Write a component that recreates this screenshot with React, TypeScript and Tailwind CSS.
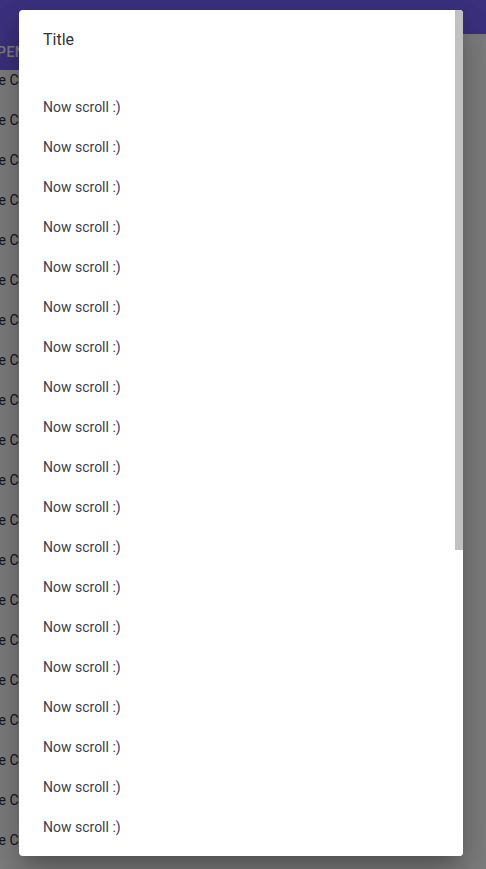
import React from "react";

export default function App() {
  const rows = Array.from({ length: 20 });
  const items = Array.from({ length: 31 });
  return (
    <div
      className="relative w-[486px] h-[869px] overflow-hidden bg-white"
      style={{ fontFamily: "Roboto, 'Noto Sans', sans-serif" }}
    >
      {/* page behind */}
      <div className="h-[34px] bg-[#7662ff]" />
      <div className="flex h-[36px] w-[200px] items-center bg-[#7662ff]">
        <span className="-ml-[13px] text-[14px] font-medium uppercase tracking-[0.4px] text-white">
          Open dialog
        </span>
      </div>
      <div className="flex flex-col gap-5">
        {rows.map((_, i) => (
          <div key={i} className="flex h-5 items-center">
            <span className="-ml-[30px] text-[14px] text-[#2a2f45]">Some Content</span>
          </div>
        ))}
      </div>

      {/* backdrop */}
      <div className="absolute inset-0 bg-black/50" />

      {/* dialog */}
      <div className="absolute left-[19px] top-[10px] flex h-[846px] w-[444px] flex-col overflow-hidden rounded-[4px] bg-white shadow-[0_11px_15px_-7px_rgba(0,0,0,0.2),0_24px_38px_3px_rgba(0,0,0,0.14),0_9px_46px_8px_rgba(0,0,0,0.12)]">
        <div className="h-full overflow-hidden">
          <div className="h-[77px] px-6 pt-[18px]">
            <div className="text-[16px] leading-6 text-[#333]">Title</div>
          </div>
          <div className="flex flex-col px-6 pb-[9px]">
            {items.map((_, i) => (
              <div key={i} className="flex h-10 items-center text-[14px] text-[#3a3f4a]">
                Now scroll :)
              </div>
            ))}
          </div>
        </div>
        {/* scrollbar */}
        <div className="absolute right-0 top-0 h-full w-2 bg-white">
          <div className="h-[540px] w-full bg-[#c1c1c1]" />
        </div>
      </div>
    </div>
  );
}
